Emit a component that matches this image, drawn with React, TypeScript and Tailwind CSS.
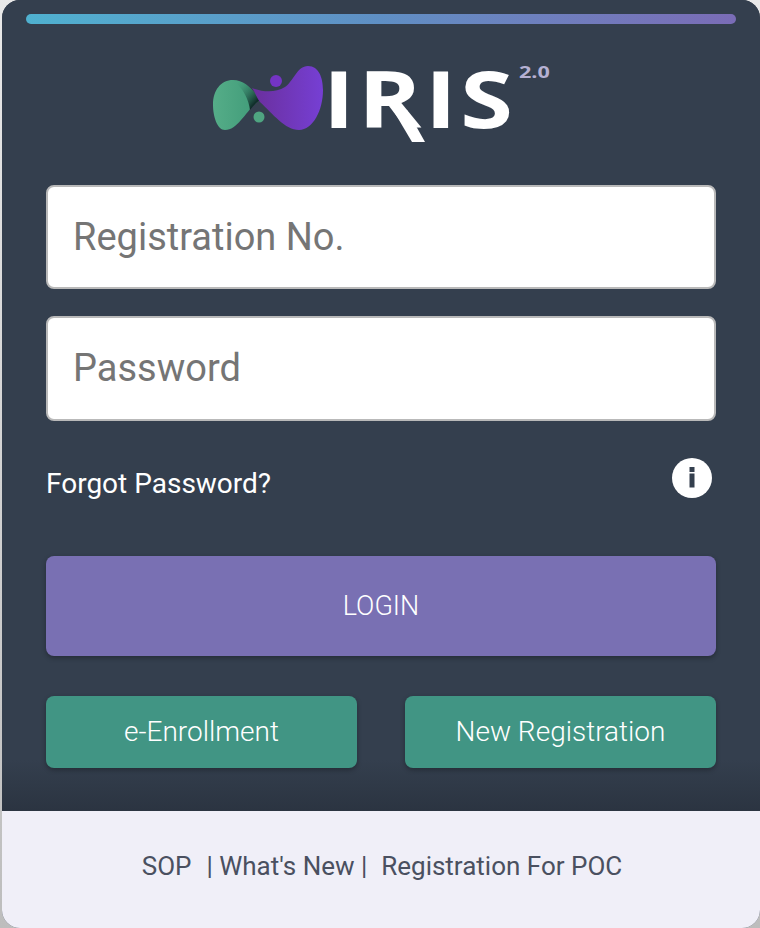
export default function App() {
  return (
    <div className="w-[760px] h-[928px] pl-[2px] bg-gradient-to-b from-[#e9e9e9] to-[#bdbdbd] font-['Roboto',sans-serif]">
      <div className="w-[758px] h-[928px] flex flex-col rounded-[18px] overflow-hidden bg-[#343f4e]">
        <div className="flex-1 flex flex-col px-[44px] bg-[linear-gradient(to_bottom,#343f4e_0,#343f4e_760px,#2b3441_811px)]">
          <div className="mt-[14px] -mx-[20px] h-[10px] rounded-full bg-gradient-to-r from-[#4fb1d0] via-[#5f8fc4] to-[#7a6cb6]" />
          <div className="h-[161px] pt-[36px] pl-[167px] flex items-start">
            <svg className="shrink-0" width="112" height="90" viewBox="0 0 112 90">
              <defs>
                <linearGradient id="g" x1="0" y1="0" x2="1" y2="0">
                  <stop offset="0" stopColor="#55ad88" />
                  <stop offset="1" stopColor="#3f9a78" />
                </linearGradient>
                <linearGradient id="p" x1="0" y1="0" x2="1" y2="0">
                  <stop offset="0" stopColor="#6a2f9c" />
                  <stop offset="1" stopColor="#763fd4" />
                </linearGradient>
                <linearGradient id="s" x1="0.2" y1="0" x2="0.9" y2="0.7">
                  <stop offset="0" stopColor="#3f9a78" stopOpacity="0" />
                  <stop offset="1" stopColor="#0f2a28" />
                </linearGradient>
              </defs>
              <path d="M12 70C4 70 0 56 0 45C0 30 8 20 20 20C32 20 40 30 47 40C38 46 34 54 28 60C23 66 18 70 12 70Z" fill="url(#g)" />
              <path d="M20 20C32 20 40 30 47 40C43 43 40 46 37 50C36 40 30 28 20 20Z" fill="url(#s)" />
              <path d="M39 28C50 32 62 33 72 27C80 22 84 6 95 6C106 6 110 18 110 30C110 50 100 70 86 70C72 70 60 54 47 42C44 38 42 32 39 28Z" fill="url(#p)" />
              <circle cx="63" cy="21" r="6" fill="#7434c4" />
              <circle cx="46" cy="57" r="5.5" fill="#4fa581" />
            </svg>
            <span className="relative w-[190px] h-[90px] shrink-0 -ml-[2px]">
              <span className="block origin-left scale-x-[1.21] mt-[-7px] text-[79px] leading-[90px] font-['Open_Sans',sans-serif] font-bold tracking-[3px] text-white">IRIS</span>
              <svg className="absolute left-[52px] top-[50px]" width="50" height="36" viewBox="0 0 50 36">
                <path d="M18 0L32 0L50 32L37 32Z" fill="#ffffff" />
              </svg>
            </span>
            <span className="shrink-0 mt-[4px] ml-[6px] text-[16px] leading-[16px] font-['Open_Sans',sans-serif] font-bold text-[#b5b0d2] origin-left scale-x-[1.35]">2.0</span>
          </div>
          <div className="h-[104px] rounded-[8px] border-2 border-[#b9b9b9] bg-white flex items-center pl-[25px] text-[38px] text-[#757575]">Registration No.</div>
          <div className="mt-[27px] h-[105px] rounded-[8px] border-2 border-[#b9b9b9] bg-white flex items-center pl-[25px] text-[38px] text-[#757575]">Password</div>
          <div className="mt-[37px] h-[44px] flex justify-between pr-[4px]">
            <span className="pt-[8px] text-[28px] leading-[36px] text-white">Forgot Password?</span>
            <span className="w-[40px] h-[40px] rounded-full bg-white flex items-center justify-center">
              <svg width="8" height="30" viewBox="0 0 8 30">
                <rect x="1.5" y="4" width="5" height="5" fill="#343f4e" />
                <rect x="1.5" y="10.5" width="5" height="14" fill="#343f4e" />
              </svg>
            </span>
          </div>
          <div className="mt-[54px] h-[100px] rounded-[8px] bg-[#7970b3] shadow-[0_2px_5px_rgba(0,0,0,0.3)] flex items-center justify-center text-[27px] font-light text-white">LOGIN</div>
          <div className="mt-[40px] flex justify-between">
            <div className="w-[311px] h-[72px] rounded-[8px] bg-[#419584] shadow-[0_2px_5px_rgba(0,0,0,0.3)] flex items-center justify-center text-[28px] font-light text-white">e-Enrollment</div>
            <div className="w-[311px] h-[72px] rounded-[8px] bg-[#419584] shadow-[0_2px_5px_rgba(0,0,0,0.3)] flex items-center justify-center text-[28px] font-light text-white">New Registration</div>
          </div>
        </div>
        <div className="h-[117px] pb-[6px] pl-[2px] bg-[#f0eff8] flex items-center justify-center text-[26px] text-[#4a5060] whitespace-pre">
          <span>SOP</span>
          <span className="ml-[2px]">  | What's New |  </span>
          <span className="ml-[1px]">Registration For POC</span>
        </div>
      </div>
    </div>
  );
}
